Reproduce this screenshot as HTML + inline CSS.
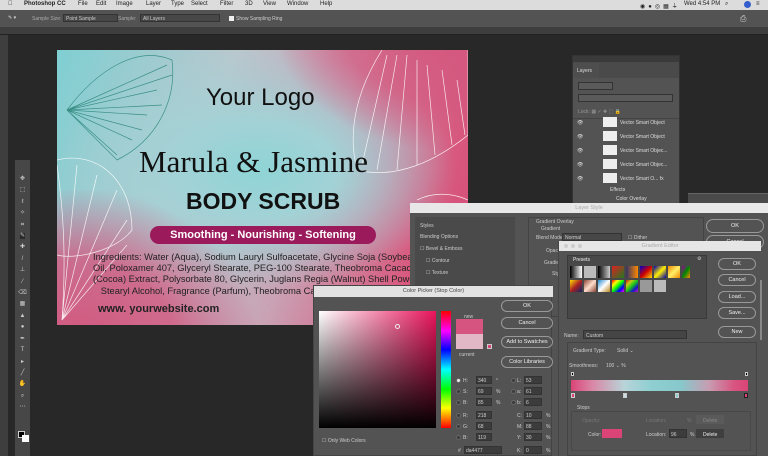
<!DOCTYPE html>
<html><head><meta charset="utf-8"><style>
*{margin:0;padding:0;box-sizing:border-box}
body{width:768px;height:456px;overflow:hidden;background:#282828;font-family:"Liberation Sans",sans-serif;position:relative;color:#ddd}
.a{position:absolute}
.t{font-size:5px;color:#ccc;white-space:nowrap}
.btn{position:absolute;border:1px solid #999;border-radius:8px;color:#eee;font-size:5.5px;text-align:center}
.fld{position:absolute;background:#3c3c3c;border:1px solid #333}
.rad{position:absolute;width:5px;height:5px;border-radius:50%;background:#3a3a3a;border:1px solid #666}
</style></head><body>
<!-- menu bar -->
<div class="a" style="left:0;top:0;width:768px;height:10px;background:#dcdcdc;font-size:6px;color:#222">
<span class="a" style="left:8px;top:1px">&#63743;</span>
<span class="a" style="left:24px;top:1px;font-weight:bold">Photoshop CC</span>
<span class="a" style="left:78px;top:1px">File</span><span class="a" style="left:96px;top:1px">Edit</span>
<span class="a" style="left:116px;top:1px">Image</span><span class="a" style="left:146px;top:1px">Layer</span>
<span class="a" style="left:171px;top:1px">Type</span><span class="a" style="left:191px;top:1px">Select</span>
<span class="a" style="left:220px;top:1px">Filter</span><span class="a" style="left:245px;top:1px">3D</span>
<span class="a" style="left:263px;top:1px">View</span><span class="a" style="left:287px;top:1px">Window</span>
<span class="a" style="left:320px;top:1px">Help</span>
<span class="a" style="left:640px;top:1px;letter-spacing:3px">◉●◎▦⏚</span>
<span class="a" style="left:684px;top:1px">Wed 4:54 PM</span>
<span class="a" style="left:725px;top:1px">⌕</span><span class="a" style="left:744px;top:0;width:7px;height:7px;border-radius:50%;background:#335ecc;margin-top:1px"></span>
<span class="a" style="left:756px;top:1px">≡</span>
</div>
<!-- options bar -->
<div class="a" style="left:0;top:10px;width:768px;height:17px;background:#535353">
<span class="a t" style="left:8px;top:5px;color:#ddd">✎ ▾</span>
<span class="a t" style="left:32px;top:6px;color:#aaa">Sample Size:</span>
<div class="fld" style="left:63px;top:4px;width:55px;height:8px;background:#474747"></div><span class="a t" style="left:66px;top:6px">Point Sample</span>
<span class="a t" style="left:118px;top:6px;color:#aaa">Sample:</span>
<div class="fld" style="left:140px;top:4px;width:80px;height:8px;background:#474747"></div><span class="a t" style="left:143px;top:6px">All Layers</span>
<div class="a" style="left:229px;top:6px;width:5px;height:5px;background:#eee"></div><span class="a t" style="left:236px;top:6px">Show Sampling Ring</span>
<span class="a t" style="left:740px;top:4px;font-size:8px">⎙</span>
</div>
<!-- ruler -->
<div class="a" style="left:0;top:27px;width:768px;height:8px;background:#3e3e3e;border-bottom:1px solid #222"></div>
<div class="a" style="left:0;top:35px;width:8px;height:421px;background:#3e3e3e"></div>
<!-- toolbar -->
<div class="a" style="left:15px;top:160px;width:15px;height:296px;background:#474747;font-size:6px;color:#ccc;text-align:center;line-height:11.4px;padding-top:14px">
✥<br>⬚<br>ℓ<br>✧<br>⌗<br><span style="background:#2a2a2a">✎</span><br>✚<br>/<br>⊥<br>⁄<br>⌫<br>▦<br>▲<br>●<br>✒<br>T<br>▸<br>╱<br>✋<br>⌕<br>⋯
<div style="position:absolute;left:3px;top:271px;width:7px;height:7px;background:#000;border:1px solid #ccc"></div>
<div style="position:absolute;left:7px;top:275px;width:7px;height:7px;background:#fff"></div>
</div>
<!-- document -->
<div class="a" style="left:57px;top:50px;width:411px;height:275px;overflow:hidden;background:
radial-gradient(ellipse 200px 120px at 200px 120px,#8fd4d6 0%,#a2d2d6 40%,rgba(170,200,205,0) 100%),
linear-gradient(110deg,#7fcfd2 0%,#b8c8ce 35%,#c9a2b4 60%,#d8587e 85%,#d34c77 100%)">
<div class="a" style="left:-60px;top:140px;width:260px;height:200px;background:radial-gradient(ellipse at 30% 80%,#d4567e 0%,rgba(212,86,126,0.8) 40%,rgba(212,86,126,0) 72%)"></div>
<div class="a" style="left:220px;top:-80px;width:260px;height:180px;background:radial-gradient(ellipse at 70% 30%,#d4567e 0%,rgba(212,86,126,0.7) 45%,rgba(212,86,126,0) 72%)"></div>
<svg class="a" style="left:0;top:0" width="411" height="275" fill="none">
<g stroke="#3a8f86" stroke-width="0.7">
<path d="M10 60 C40 20 80 -5 115 10 C120 50 100 90 60 110 Z"/>
<path d="M10 60 L110 15 M10 60 L100 40 M10 60 L90 65 M10 60 L75 90 M10 60 L60 105 M10 60 L115 25 M10 60 L105 55 M10 60 L85 80"/>
</g>
<g stroke="#fff" stroke-width="0.7" opacity="0.85">
<path d="M325 0 C300 40 290 80 300 120 C340 130 380 110 411 85 L411 0"/>
<path d="M330 5 L305 115 M340 5 L320 120 M350 5 L340 120 M360 10 L360 115 M370 15 L378 105 M385 20 L395 95 M400 30 L408 85"/>
<path d="M0 110 C40 100 75 130 75 180 C60 200 20 210 0 205"/>
<path d="M5 270 C10 200 5 150 0 115 M5 270 L60 140 M5 270 L70 170 M5 270 L40 125 M5 270 L20 115 M5 270 L70 195"/>
<path d="M360 150 C380 140 400 145 411 150"/>
</g>
</svg>
<div class="a" style="left:149px;top:34px;font-size:24px;color:#111;white-space:nowrap">Your Logo</div>
<div class="a" style="left:82px;top:94px;font-family:'Liberation Serif',serif;font-size:31px;color:#111;white-space:nowrap">Marula &amp; Jasmine</div>
<div class="a" style="left:129px;top:138px;font-size:23px;font-weight:bold;color:#111;white-space:nowrap">BODY SCRUB</div>
<div class="a" style="left:93px;top:176px;width:226px;height:18px;border-radius:9px;background:#9a1a5c;color:#fff;font-weight:bold;font-size:11px;text-align:center;line-height:18px">Smoothing - Nourishing - Softening</div>
<div class="a" style="left:36px;top:202px;font-size:9.3px;color:#222;line-height:11.2px;white-space:nowrap">Ingredients: Water (Aqua), Sodium Lauryl Sulfoacetate, Glycine Soja (Soybean)<br>Oil, Poloxamer 407, Glyceryl Stearate, PEG-100 Stearate, Theobroma Cacao<br>(Cocoa) Extract, Polysorbate 80, Glycerin, Juglans Regia (Walnut) Shell Powder<br>&nbsp;&nbsp;&nbsp;Stearyl Alcohol, Fragrance (Parfum), Theobroma Cacao</div>
<div class="a" style="left:41px;top:253px;font-size:11px;font-weight:bold;color:#222">www. yourwebsite.com</div>
</div>
<!-- layers panel -->
<div class="a" style="left:572px;top:55px;width:108px;height:150px;background:#4a4a4a;border:1px solid #333">
<div class="a" style="left:0;top:0;width:106px;height:6px;background:#3a3a3a"></div>
<div class="a" style="left:0;top:7px;width:26px;height:15px;background:#4e4e4e;font-size:5px;color:#ddd;padding:5px 0 0 4px">Layers</div>
<div class="a" style="left:0;top:22px;width:106px;height:40px;background:#535353"></div>
<div class="fld" style="left:5px;top:26px;width:35px;height:8px;background:#5a5a5a"></div>
<div class="fld" style="left:5px;top:38px;width:95px;height:8px;background:#5a5a5a"></div>
<span class="a t" style="left:5px;top:53px;color:#999">Lock: ▦ ✓ ✚ ⬚ 🔒</span>
<div class="a" style="left:0;top:62px;width:106px;height:90px;background:#535353"></div>
<div class="a" style="left:0;top:62px;width:106px;height:1px;background:#444"></div>
</div>
<div class="a" style="left:572px;top:117px;width:108px;height:90px;font-size:5px;color:#ddd">
<div class="a" style="left:5px;top:3px">👁</div><div class="a" style="left:31px;top:0;width:14px;height:10px;background:#eee"></div><div class="a" style="left:48px;top:3px">Vector Smart Object</div>
<div class="a" style="left:5px;top:17px">👁</div><div class="a" style="left:31px;top:14px;width:14px;height:10px;background:#eee"></div><div class="a" style="left:48px;top:17px">Vector Smart Object</div>
<div class="a" style="left:5px;top:31px">👁</div><div class="a" style="left:31px;top:28px;width:14px;height:10px;background:#eee"></div><div class="a" style="left:48px;top:31px">Vector Smart Objec...</div>
<div class="a" style="left:5px;top:45px">👁</div><div class="a" style="left:31px;top:42px;width:14px;height:10px;background:#eee"></div><div class="a" style="left:48px;top:45px">Vector Smart Objec...</div>
<div class="a" style="left:5px;top:59px">👁</div><div class="a" style="left:31px;top:56px;width:14px;height:10px;background:#eee"></div><div class="a" style="left:48px;top:59px">Vector Smart O... fx</div>
<div class="a" style="left:38px;top:70px">Effects</div>
<div class="a" style="left:44px;top:79px">Color Overlay</div>
</div>
<div class="a" style="left:688px;top:193px;width:80px;height:15px;background:#4a4a4a;border-top:1px solid #666"></div>
<!-- layer style dialog -->
<div class="a" style="left:410px;top:203px;width:358px;height:253px;background:#535353">
<div class="a" style="left:0;top:0;width:358px;height:10px;background:#e8e8e8;font-size:5.5px;color:#aaa;text-align:center;line-height:10px">Layer Style</div>
<div class="a" style="left:5px;top:14px;width:100px;height:100px;background:#4a4a4a"></div>
<span class="a t" style="left:10px;top:20px">Styles</span>
<span class="a t" style="left:10px;top:31px">Blending Options</span>
<span class="a t" style="left:10px;top:43px">☐ Bevel &amp; Emboss</span>
<span class="a t" style="left:16px;top:55px">☐ Contour</span>
<span class="a t" style="left:16px;top:67px">☐ Texture</span>
<div class="a" style="left:118px;top:14px;width:176px;height:100px;border:1px solid #444"></div>
<span class="a t" style="left:126px;top:16px">Gradient Overlay</span>
<span class="a t" style="left:131px;top:23px">Gradient</span>
<span class="a t" style="left:126px;top:32px">Blend Mode:</span>
<div class="fld" style="left:152px;top:30px;width:60px;height:8px;background:#474747"></div><span class="a t" style="left:155px;top:32px">Normal</span>
<span class="a t" style="left:218px;top:32px">☐ Dither</span>
<span class="a t" style="left:136px;top:45px">Opaci</span>
<span class="a t" style="left:134px;top:57px">Gradie</span>
<span class="a t" style="left:142px;top:68px">Sty</span>
<div class="btn" style="left:296px;top:16px;width:58px;height:14px;line-height:12px">OK</div>
<div class="btn" style="left:296px;top:32px;width:58px;height:14px;line-height:12px">Cancel</div>
</div>
<!-- gradient editor -->
<div class="a" style="left:558px;top:241px;width:202px;height:215px;background:#535353;border-left:1px solid #444">
<div class="a" style="left:0;top:0;width:202px;height:10px;background:#e6e6e6;font-size:5.5px;color:#aaa;text-align:center;line-height:10px">Gradient Editor</div>
<div class="a" style="left:5px;top:3px;width:4px;height:4px;border-radius:50%;background:#ccc"></div><div class="a" style="left:12px;top:3px;width:4px;height:4px;border-radius:50%;background:#ccc"></div><div class="a" style="left:19px;top:3px;width:4px;height:4px;border-radius:50%;background:#ccc"></div>
<div class="a" style="left:8px;top:14px;width:140px;height:64px;background:#484848;border:1px solid #3a3a3a"></div>
<span class="a t" style="left:14px;top:16px;color:#eee">Presets</span>
<span class="a t" style="left:138px;top:15px">⚙</span>
<svg class="a" style="left:11px;top:25px" width="120" height="26">
<defs>
<linearGradient id="a1"><stop offset="0" stop-color="#000"/><stop offset="1" stop-color="#fff"/></linearGradient>
<linearGradient id="a2"><stop offset="0" stop-color="#000"/><stop offset="1" stop-color="#ccc"/></linearGradient>
<linearGradient id="a4" x2="1" y2="1"><stop offset="0" stop-color="#d22"/><stop offset="1" stop-color="#272"/></linearGradient>
<linearGradient id="a5"><stop offset="0" stop-color="#336"/><stop offset="1" stop-color="#f80"/></linearGradient>
<linearGradient id="a6" x2="1" y2="1"><stop offset="0" stop-color="#00c"/><stop offset=".5" stop-color="#c00"/><stop offset="1" stop-color="#fd0"/></linearGradient>
<linearGradient id="a7" x2="1" y2="1"><stop offset="0" stop-color="#00a"/><stop offset=".5" stop-color="#fe0"/><stop offset="1" stop-color="#00a"/></linearGradient>
<linearGradient id="a8" x2="1" y2="1"><stop offset="0" stop-color="#e80"/><stop offset=".5" stop-color="#fe6"/><stop offset="1" stop-color="#e80"/></linearGradient>
<linearGradient id="a9" x2="1" y2="1"><stop offset="0" stop-color="#909"/><stop offset=".5" stop-color="#080"/><stop offset="1" stop-color="#f80"/></linearGradient>
<linearGradient id="b1" x2="1" y2="1"><stop offset="0" stop-color="#fd0"/><stop offset=".5" stop-color="#a22"/><stop offset="1" stop-color="#126"/></linearGradient>
<linearGradient id="b2" x2="1" y2="1"><stop offset="0" stop-color="#843"/><stop offset=".5" stop-color="#fdc"/><stop offset="1" stop-color="#843"/></linearGradient>
<linearGradient id="b3" x2="1" y2="1"><stop offset="0" stop-color="#28c"/><stop offset=".5" stop-color="#fff"/><stop offset="1" stop-color="#b82"/></linearGradient>
<linearGradient id="b4" x2="1" y2="1"><stop offset="0" stop-color="#f00"/><stop offset=".25" stop-color="#ff0"/><stop offset=".5" stop-color="#0f0"/><stop offset=".75" stop-color="#00f"/><stop offset="1" stop-color="#f0f"/></linearGradient>
</defs>
<rect x="0" y="0" width="12" height="12" fill="url(#a1)"/><rect x="14" y="0" width="12" height="12" fill="#bbb"/><rect x="28" y="0" width="12" height="12" fill="url(#a2)"/>
<rect x="42" y="0" width="12" height="12" fill="url(#a4)"/><rect x="56" y="0" width="12" height="12" fill="url(#a5)"/><rect x="70" y="0" width="12" height="12" fill="url(#a6)"/>
<rect x="84" y="0" width="12" height="12" fill="url(#a7)"/><rect x="98" y="0" width="12" height="12" fill="url(#a8)"/><rect x="112" y="0" width="8" height="12" fill="url(#a9)"/>
<rect x="0" y="14" width="12" height="12" fill="url(#b1)"/><rect x="14" y="14" width="12" height="12" fill="url(#b2)"/><rect x="28" y="14" width="12" height="12" fill="url(#b3)"/>
<rect x="42" y="14" width="12" height="12" fill="url(#b4)"/><rect x="56" y="14" width="12" height="12" fill="url(#b4)" opacity=".7"/><rect x="70" y="14" width="12" height="12" fill="#999"/><rect x="84" y="14" width="12" height="12" fill="#bbb"/>
</svg>
<div class="btn" style="left:159px;top:17px;width:38px;height:12px;line-height:10px">OK</div>
<div class="btn" style="left:159px;top:33px;width:38px;height:12px;line-height:10px">Cancel</div>
<div class="btn" style="left:159px;top:50px;width:38px;height:12px;line-height:10px">Load...</div>
<div class="btn" style="left:159px;top:66px;width:38px;height:12px;line-height:10px">Save...</div>
<div class="btn" style="left:159px;top:85px;width:38px;height:12px;line-height:10px">New</div>
<span class="a t" style="left:5px;top:92px">Name:</span>
<div class="fld" style="left:24px;top:89px;width:104px;height:9px;background:#454545"></div><span class="a t" style="left:27px;top:92px">Custom</span>
<div class="a" style="left:8px;top:101px;width:190px;height:114px;border:1px solid #444"></div>
<span class="a t" style="left:14px;top:107px">Gradient Type:</span><span class="a t" style="left:58px;top:107px">Solid ⌄</span>
<span class="a t" style="left:10px;top:122px">Smoothness:</span><span class="a t" style="left:47px;top:122px">100 ⌄ %</span>
<div class="a" style="left:12px;top:131px;width:3px;height:4px;background:#000;border:1px solid #ccc"></div>
<div class="a" style="left:186px;top:131px;width:3px;height:4px;background:#000;border:1px solid #ccc"></div>
<div class="a" style="left:12px;top:139px;width:177px;height:11px;background:linear-gradient(90deg,#da4477 0%,#d987a6 12%,#b8d4d8 30%,#8fcfd2 45%,#86c8cb 62%,#c89cb2 78%,#d85580 92%,#da4477 100%)"></div>
<div class="a" style="left:12px;top:152px;width:4px;height:5px;background:#da4477;border:1px solid #ccc"></div>
<div class="a" style="left:64px;top:152px;width:4px;height:5px;background:#c9dde0;border:1px solid #ccc"></div>
<div class="a" style="left:116px;top:152px;width:4px;height:5px;background:#8fcfd2;border:1px solid #ccc"></div>
<div class="a" style="left:185px;top:152px;width:4px;height:5px;background:#da4477;border:1px solid #222"></div>
<span class="a t" style="left:18px;top:164px">Stops</span>
<div class="a" style="left:12px;top:170px;width:180px;height:40px;border:1px solid #484848"></div>
<span class="a t" style="left:23px;top:177px;color:#777">Opacity:</span><span class="a t" style="left:87px;top:177px;color:#777">Location:</span><span class="a t" style="left:128px;top:177px;color:#777">%</span>
<div class="a" style="left:137px;top:174px;width:28px;height:9px;background:#5a5a5a"></div><span class="a t" style="left:144px;top:177px;color:#888">Delete</span>
<span class="a t" style="left:29px;top:191px">Color:</span><div class="a" style="left:43px;top:188px;width:20px;height:9px;background:#da4477"></div>
<span class="a t" style="left:87px;top:191px">Location:</span><div class="fld" style="left:110px;top:188px;width:18px;height:9px"></div><span class="a t" style="left:112px;top:191px">96</span><span class="a t" style="left:131px;top:191px">%</span>
<div class="a" style="left:137px;top:188px;width:28px;height:9px;background:#3f3f3f"></div><span class="a t" style="left:144px;top:191px;color:#eee">Delete</span>
</div>
<div class="a" style="left:760px;top:280px;width:2px;height:60px;background:#888"></div>
<!-- color picker -->
<div class="a" style="left:313px;top:285px;width:239px;height:171px;background:#535353;border:1px solid #444">
<div class="a" style="left:0;top:0;width:239px;height:11px;background:#e2e2e2;font-size:5.5px;color:#444;text-align:center;line-height:11px">Color Picker (Stop Color)</div>
<div class="a" style="left:5px;top:25px;width:117px;height:117px;background:linear-gradient(to top,#000,rgba(0,0,0,0)),linear-gradient(90deg,#fff,#e9145c)"></div>
<div class="a" style="left:81px;top:38px;width:5px;height:5px;border-radius:50%;border:1px solid #eee"></div>
<div class="a" style="left:127px;top:25px;width:10px;height:117px;background:linear-gradient(#f00,#f0f 17%,#00f 33%,#0ff 50%,#0f0 67%,#ff0 83%,#f00)"></div>
<span class="a t" style="left:150px;top:28px">new</span>
<div class="a" style="left:142px;top:33px;width:27px;height:15px;background:#d55580"></div>
<div class="a" style="left:142px;top:48px;width:27px;height:15px;background:#e2b7c6"></div>
<span class="a t" style="left:145px;top:66px">current</span>
<div class="a" style="left:173px;top:58px;width:5px;height:5px;background:#da4477;border:1px solid #ccc"></div>
<div class="btn" style="left:187px;top:14px;width:52px;height:12px;line-height:10px">OK</div>
<div class="btn" style="left:187px;top:31px;width:52px;height:12px;line-height:10px">Cancel</div>
<div class="btn" style="left:187px;top:50px;width:52px;height:12px;line-height:10px">Add to Swatches</div>
<div class="btn" style="left:187px;top:70px;width:52px;height:12px;line-height:10px">Color Libraries</div>
<span class="a t" style="left:8px;top:152px">☐ Only Web Colors</span>
<div class="rad" style="left:142px;top:92px;background:#eee"></div><span class="a t" style="left:149px;top:92px">H:</span><div class="fld" style="left:162px;top:90px;width:16px;height:8px"></div><span class="a t" style="left:164px;top:92px">340</span><span class="a t" style="left:182px;top:92px">°</span>
<div class="rad" style="left:142px;top:103px"></div><span class="a t" style="left:149px;top:103px">S:</span><div class="fld" style="left:162px;top:101px;width:16px;height:8px"></div><span class="a t" style="left:164px;top:103px">69</span><span class="a t" style="left:182px;top:103px">%</span>
<div class="rad" style="left:142px;top:114px"></div><span class="a t" style="left:149px;top:114px">B:</span><div class="fld" style="left:162px;top:112px;width:16px;height:8px"></div><span class="a t" style="left:164px;top:114px">85</span><span class="a t" style="left:182px;top:114px">%</span>
<div class="rad" style="left:142px;top:127px"></div><span class="a t" style="left:149px;top:127px">R:</span><div class="fld" style="left:162px;top:125px;width:16px;height:8px"></div><span class="a t" style="left:164px;top:127px">218</span>
<div class="rad" style="left:142px;top:138px"></div><span class="a t" style="left:149px;top:138px">G:</span><div class="fld" style="left:162px;top:136px;width:16px;height:8px"></div><span class="a t" style="left:164px;top:138px">68</span>
<div class="rad" style="left:142px;top:149px"></div><span class="a t" style="left:149px;top:149px">B:</span><div class="fld" style="left:162px;top:147px;width:16px;height:8px"></div><span class="a t" style="left:164px;top:149px">119</span>
<span class="a t" style="left:144px;top:162px">#</span><div class="fld" style="left:150px;top:160px;width:38px;height:8px"></div><span class="a t" style="left:152px;top:162px">da4477</span>
<div class="rad" style="left:197px;top:92px"></div><span class="a t" style="left:203px;top:92px">L:</span><div class="fld" style="left:210px;top:90px;width:18px;height:8px"></div><span class="a t" style="left:212px;top:92px">53</span>
<div class="rad" style="left:197px;top:103px"></div><span class="a t" style="left:203px;top:103px">a:</span><div class="fld" style="left:210px;top:101px;width:18px;height:8px"></div><span class="a t" style="left:212px;top:103px">61</span>
<div class="rad" style="left:197px;top:114px"></div><span class="a t" style="left:203px;top:114px">b:</span><div class="fld" style="left:210px;top:112px;width:18px;height:8px"></div><span class="a t" style="left:212px;top:114px">6</span>
<span class="a t" style="left:203px;top:127px">C:</span><div class="fld" style="left:210px;top:125px;width:18px;height:8px"></div><span class="a t" style="left:212px;top:127px">10</span><span class="a t" style="left:232px;top:127px">%</span>
<span class="a t" style="left:203px;top:138px">M:</span><div class="fld" style="left:210px;top:136px;width:18px;height:8px"></div><span class="a t" style="left:212px;top:138px">88</span><span class="a t" style="left:232px;top:138px">%</span>
<span class="a t" style="left:203px;top:149px">Y:</span><div class="fld" style="left:210px;top:147px;width:18px;height:8px"></div><span class="a t" style="left:212px;top:149px">30</span><span class="a t" style="left:232px;top:149px">%</span>
<span class="a t" style="left:203px;top:162px">K:</span><div class="fld" style="left:210px;top:160px;width:18px;height:8px"></div><span class="a t" style="left:212px;top:162px">0</span><span class="a t" style="left:232px;top:162px">%</span>
</div>
</body></html>
